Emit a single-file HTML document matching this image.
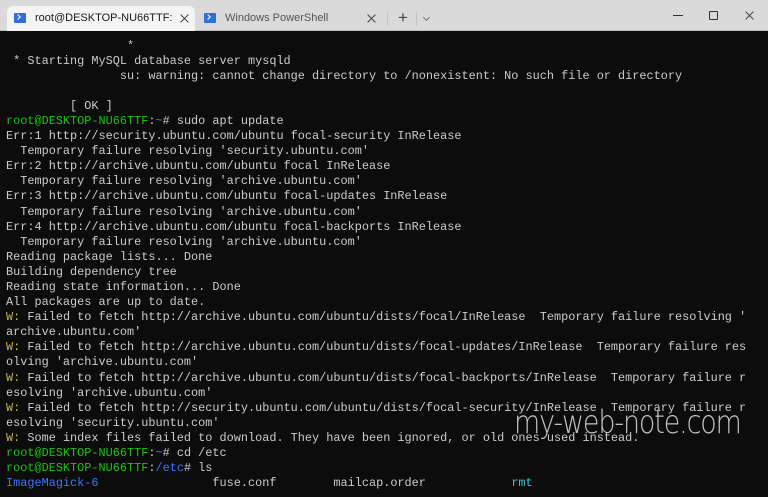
<!DOCTYPE html>
<html><head><meta charset="utf-8"><style>
*{margin:0;padding:0;box-sizing:border-box}
body{width:768px;height:497px;overflow:hidden;background:#0c0c0c;font-family:"Liberation Sans",sans-serif;position:relative}
.bar{position:absolute;left:0;top:0;width:768px;height:31px;background:#dadada;border-bottom:1px solid #bdbdbd}
.tab{position:absolute;top:6px;height:25px;font-size:11px;color:#1a1a1a;line-height:25px}
.t1{left:7px;width:188px;background:#f4f4f4;border-radius:6px 6px 0 0}
.t2{left:197px;width:190px;color:#555}
.ic{position:absolute;left:7px;top:7px;width:12px;height:10px;background:#2f6fd6;border-radius:1px}
.ic:after{content:"";position:absolute;left:2px;top:2px;width:3px;height:3px;border-right:1.3px solid #fff;border-bottom:1.3px solid #fff;transform:rotate(-45deg)}
.lbl{position:absolute;left:28px;top:0;white-space:nowrap;overflow:hidden}
.x{position:absolute;width:9px;height:9px}
.x:before,.x:after{content:"";position:absolute;left:4px;top:-1px;width:1px;height:11px;background:#444;transform:rotate(45deg)}
.x:after{transform:rotate(-45deg)}
pre{position:absolute;left:6px;top:38.5px;font-family:"Liberation Mono",monospace;font-size:11.86px;line-height:15.1px;color:#cccccc;white-space:pre}
.g{color:#16c60c}.b{color:#3b78ff}.y{color:#c9b456}.c{color:#3ac9c9}
.wm{position:absolute;left:514px;top:403px;font-size:32px;color:rgba(255,255,255,.75);font-family:"DejaVu Sans",sans-serif;font-weight:200;white-space:nowrap;letter-spacing:-1.3px;transform:scaleX(0.84);transform-origin:left}
</style></head><body>
<div class="bar">
 <div class="tab t1"><div class="ic"></div><div class="lbl" style="width:137px">root@DESKTOP-NU66TTF: /etc</div><span class="x" style="left:173px;top:8px"></span></div>
 <div class="tab t2"><div class="ic"></div><div class="lbl">Windows PowerShell</div><span class="x" style="left:170px;top:8px"></span></div>
 <div style="position:absolute;left:387px;top:12px;width:1px;height:14px;background:#c4c4c4"></div>
 <div style="position:absolute;left:398px;top:8px;font-size:17px;color:#444">+</div>
 <div style="position:absolute;left:416px;top:12px;width:1px;height:14px;background:#c4c4c4"></div>
 <div style="position:absolute;left:424px;top:15px;width:5px;height:5px;border-right:1px solid #777;border-bottom:1px solid #777;transform:rotate(45deg)"></div>
 <div style="position:absolute;left:673px;top:15px;width:10px;height:1px;background:#333"></div>
 <div style="position:absolute;left:709px;top:11px;width:9px;height:9px;border:1px solid #333;border-radius:1px"></div>
 <span class="x" style="left:745px;top:11px"></span>
</div>
<pre>                 *
 * Starting MySQL database server mysqld
                su: warning: cannot change directory to /nonexistent: No such file or directory

         [ OK ]
<span class="g">root@DESKTOP-NU66TTF</span>:<span class="b">~</span># sudo apt update
Err:1 http://security.ubuntu.com/ubuntu focal-security InRelease
  Temporary failure resolving 'security.ubuntu.com'
Err:2 http://archive.ubuntu.com/ubuntu focal InRelease
  Temporary failure resolving 'archive.ubuntu.com'
Err:3 http://archive.ubuntu.com/ubuntu focal-updates InRelease
  Temporary failure resolving 'archive.ubuntu.com'
Err:4 http://archive.ubuntu.com/ubuntu focal-backports InRelease
  Temporary failure resolving 'archive.ubuntu.com'
Reading package lists... Done
Building dependency tree
Reading state information... Done
All packages are up to date.
<span class="y">W: </span>Failed to fetch http://archive.ubuntu.com/ubuntu/dists/focal/InRelease  Temporary failure resolving '
archive.ubuntu.com'
<span class="y">W: </span>Failed to fetch http://archive.ubuntu.com/ubuntu/dists/focal-updates/InRelease  Temporary failure res
olving 'archive.ubuntu.com'
<span class="y">W: </span>Failed to fetch http://archive.ubuntu.com/ubuntu/dists/focal-backports/InRelease  Temporary failure r
esolving 'archive.ubuntu.com'
<span class="y">W: </span>Failed to fetch http://security.ubuntu.com/ubuntu/dists/focal-security/InRelease  Temporary failure r
esolving 'security.ubuntu.com'
<span class="y">W: </span>Some index files failed to download. They have been ignored, or old ones used instead.
<span class="g">root@DESKTOP-NU66TTF</span>:<span class="b">~</span># cd /etc
<span class="g">root@DESKTOP-NU66TTF</span>:<span class="b">/etc</span># ls
<span class="b">ImageMagick-6</span>                fuse.conf        mailcap.order            <span class="c">rmt</span></pre>
<div class="wm">my-web-note.com</div>
</body></html>
